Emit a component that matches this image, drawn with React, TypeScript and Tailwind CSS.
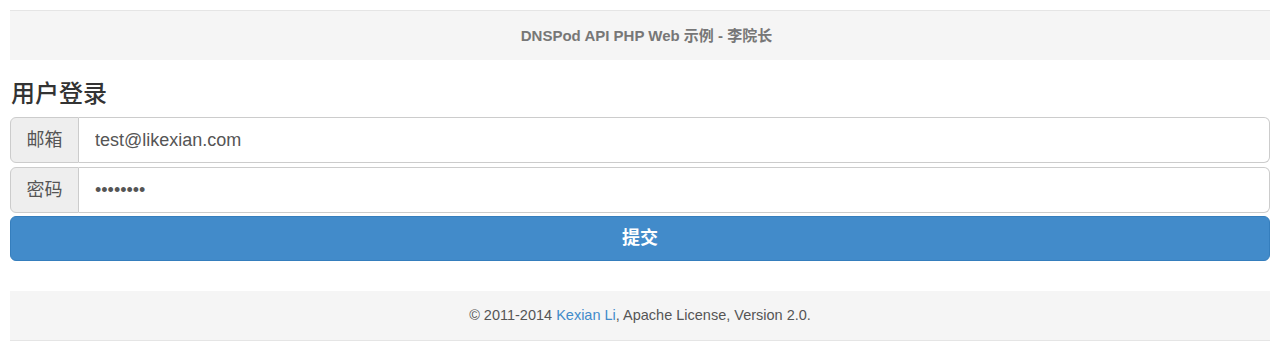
import { useState } from 'react'

const font = { fontFamily: '"Liberation Sans", "Noto Sans CJK SC", sans-serif' }

function InputGroup({ label, type, value }: { label: string; type: string; value: string }) {
  const [val, setVal] = useState(value)
  return (
    <div className="flex h-[46px] w-full">
      <span className="flex w-[69px] shrink-0 items-center justify-center rounded-l-[6px] border border-[#ccc] bg-[#eee] text-[18px] text-[#555]">
        {label}
      </span>
      <input
        type={type}
        value={val}
        onChange={(e) => setVal(e.target.value)}
        className="h-full min-w-0 flex-1 rounded-r-[6px] border border-l-0 border-[#ccc] bg-white px-4 text-[18px] text-[#555] outline-none"
      />
    </div>
  )
}

export default function App() {
  return (
    <div className="min-h-screen bg-white px-[10px] pt-[10px] text-[#333]" style={font}>
      <header className="flex h-[50px] items-center justify-center border-t border-[#e5e5e5] bg-[#f5f5f5] pt-px pl-[13px] text-[15px] font-bold text-[#777]">
        DNSPod API PHP Web 示例 - 李院长
      </header>

      <h3 className="mt-[21px] mb-[10px] pl-px text-[24px] leading-[1.1] font-medium text-[#333]">用户登录</h3>

      <form className="flex flex-col" onSubmit={(e) => e.preventDefault()}>
        <InputGroup label="邮箱" type="text" value="test@likexian.com" />
        <div className="mt-1">
          <InputGroup label="密码" type="password" value="12345678" />
        </div>
        <button
          type="submit"
          className="mt-[3px] h-[45px] w-full rounded-[6px] border border-[#357ebd] bg-[#428bca] text-[18px] font-bold text-white"
        >
          提交
        </button>
      </form>

      <footer className="mt-[30px] flex h-[50px] items-center justify-center border-b border-[#e5e5e5] bg-[#f5f5f5] text-[14.5px] text-[#555]">
        © 2011-2014&nbsp;<a href="#" className="text-[#428bca]">Kexian Li</a>, Apache License, Version 2.0.
      </footer>
    </div>
  )
}
